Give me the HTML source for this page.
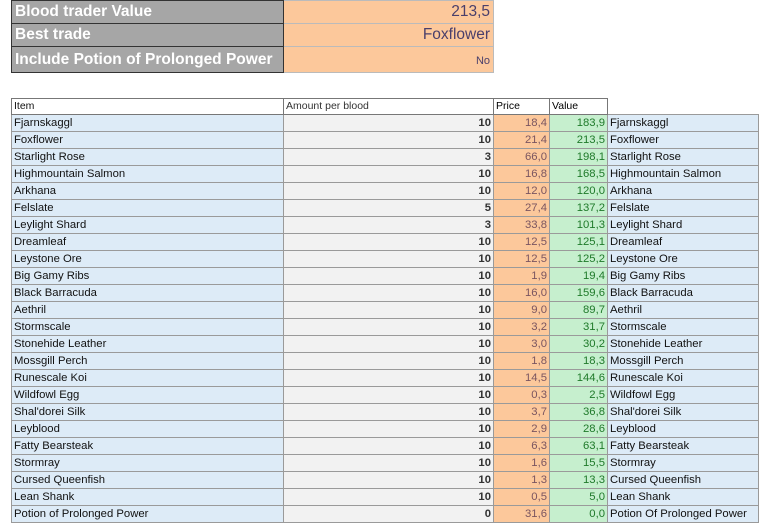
<!DOCTYPE html><html><head><style>
body{margin:0;background:#fff;width:768px;height:532px;overflow:hidden;position:relative;font-family:"Liberation Sans",Arial,sans-serif}
.top{position:absolute;left:11px;top:0;border-collapse:collapse;table-layout:fixed}
.top td{height:22px;padding:0 3px;border:1px solid #555;font-size:15.5px;white-space:nowrap;overflow:hidden}
.top td.a{width:265px;background:#a6a6a6;color:#fff;font-weight:bold;border-color:#333}
.top td.b{width:203px;background:#fcc89b;color:#4a3f6b;text-align:right;border-color:#bbb}
.m{position:absolute;left:11px;top:98px;border-collapse:collapse;table-layout:fixed}
.m td{height:16px;padding:0 2px;border:1px solid #9a9a9a;font-size:11.3px;white-space:nowrap;overflow:hidden;line-height:16px}
.m tr.h td{background:#fff;font-size:10.5px;height:15px;line-height:15px;border-color:#777}
.i{width:267px;background:#ddebf7;color:#111}
.am{width:205px;background:#f2f2f2;text-align:right;font-weight:bold;color:#333}
.p{width:51px;background:#fcc89b;text-align:right;color:#7a5560}
.v{width:53px;background:#c6efce;text-align:right;color:#1f7a2a}
.n{width:146px;background:#ddebf7;color:#111}
</style></head><body>
<table class="top">
<tr><td class="a">Blood trader Value</td><td class="b">213,5</td></tr>
<tr><td class="a">Best trade</td><td class="b">Foxflower</td></tr>
<tr><td class="a">Include Potion of Prolonged Power</td><td class="b" style="font-size:11px;padding-top:3px">No</td></tr>
</table>
<table class="m">
<tr class="h"><td class="i" style="background:#fff">Item</td><td class="am" style="background:#fff;text-align:left;font-weight:normal">Amount per blood</td><td class="p" style="background:#fff;text-align:left;color:#000">Price</td><td class="v" style="background:#fff;text-align:left;color:#000">Value</td><td class="n" style="background:#fff;border:none;border-left:1px solid #777;border-bottom:1px solid #9a9a9a"></td></tr>
<tr><td class="i">Fjarnskaggl</td><td class="am">10</td><td class="p">18,4</td><td class="v">183,9</td><td class="n">Fjarnskaggl</td></tr>
<tr><td class="i">Foxflower</td><td class="am">10</td><td class="p">21,4</td><td class="v">213,5</td><td class="n">Foxflower</td></tr>
<tr><td class="i">Starlight Rose</td><td class="am">3</td><td class="p">66,0</td><td class="v">198,1</td><td class="n">Starlight Rose</td></tr>
<tr><td class="i">Highmountain Salmon</td><td class="am">10</td><td class="p">16,8</td><td class="v">168,5</td><td class="n">Highmountain Salmon</td></tr>
<tr><td class="i">Arkhana</td><td class="am">10</td><td class="p">12,0</td><td class="v">120,0</td><td class="n">Arkhana</td></tr>
<tr><td class="i">Felslate</td><td class="am">5</td><td class="p">27,4</td><td class="v">137,2</td><td class="n">Felslate</td></tr>
<tr><td class="i">Leylight Shard</td><td class="am">3</td><td class="p">33,8</td><td class="v">101,3</td><td class="n">Leylight Shard</td></tr>
<tr><td class="i">Dreamleaf</td><td class="am">10</td><td class="p">12,5</td><td class="v">125,1</td><td class="n">Dreamleaf</td></tr>
<tr><td class="i">Leystone Ore</td><td class="am">10</td><td class="p">12,5</td><td class="v">125,2</td><td class="n">Leystone Ore</td></tr>
<tr><td class="i">Big Gamy Ribs</td><td class="am">10</td><td class="p">1,9</td><td class="v">19,4</td><td class="n">Big Gamy Ribs</td></tr>
<tr><td class="i">Black Barracuda</td><td class="am">10</td><td class="p">16,0</td><td class="v">159,6</td><td class="n">Black Barracuda</td></tr>
<tr><td class="i">Aethril</td><td class="am">10</td><td class="p">9,0</td><td class="v">89,7</td><td class="n">Aethril</td></tr>
<tr><td class="i">Stormscale</td><td class="am">10</td><td class="p">3,2</td><td class="v">31,7</td><td class="n">Stormscale</td></tr>
<tr><td class="i">Stonehide Leather</td><td class="am">10</td><td class="p">3,0</td><td class="v">30,2</td><td class="n">Stonehide Leather</td></tr>
<tr><td class="i">Mossgill Perch</td><td class="am">10</td><td class="p">1,8</td><td class="v">18,3</td><td class="n">Mossgill Perch</td></tr>
<tr><td class="i">Runescale Koi</td><td class="am">10</td><td class="p">14,5</td><td class="v">144,6</td><td class="n">Runescale Koi</td></tr>
<tr><td class="i">Wildfowl Egg</td><td class="am">10</td><td class="p">0,3</td><td class="v">2,5</td><td class="n">Wildfowl Egg</td></tr>
<tr><td class="i">Shal'dorei Silk</td><td class="am">10</td><td class="p">3,7</td><td class="v">36,8</td><td class="n">Shal'dorei Silk</td></tr>
<tr><td class="i">Leyblood</td><td class="am">10</td><td class="p">2,9</td><td class="v">28,6</td><td class="n">Leyblood</td></tr>
<tr><td class="i">Fatty Bearsteak</td><td class="am">10</td><td class="p">6,3</td><td class="v">63,1</td><td class="n">Fatty Bearsteak</td></tr>
<tr><td class="i">Stormray</td><td class="am">10</td><td class="p">1,6</td><td class="v">15,5</td><td class="n">Stormray</td></tr>
<tr><td class="i">Cursed Queenfish</td><td class="am">10</td><td class="p">1,3</td><td class="v">13,3</td><td class="n">Cursed Queenfish</td></tr>
<tr><td class="i">Lean Shank</td><td class="am">10</td><td class="p">0,5</td><td class="v">5,0</td><td class="n">Lean Shank</td></tr>
<tr><td class="i">Potion of Prolonged Power</td><td class="am">0</td><td class="p">31,6</td><td class="v">0,0</td><td class="n">Potion Of Prolonged Power</td></tr>
</table>
</body></html>
